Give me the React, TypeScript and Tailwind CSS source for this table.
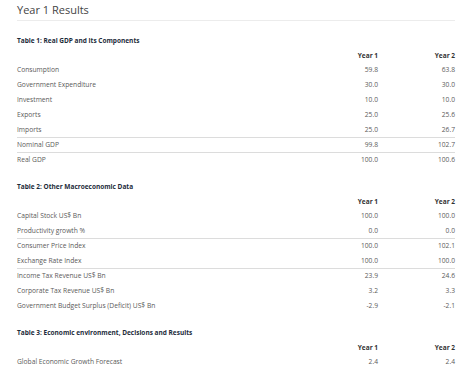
import React from 'react';

type Row = { label: string; y1: string; y2: string; line?: boolean };

const tables: { title: string; rows: Row[] }[] = [
  {
    title: 'Table 1: Real GDP and its Components',
    rows: [
      { label: 'Consumption', y1: '59.8', y2: '63.8' },
      { label: 'Government Expenditure', y1: '30.0', y2: '30.0' },
      { label: 'Investment', y1: '10.0', y2: '10.0' },
      { label: 'Exports', y1: '25.0', y2: '25.6' },
      { label: 'Imports', y1: '25.0', y2: '26.7', line: true },
      { label: 'Nominal GDP', y1: '99.8', y2: '102.7', line: true },
      { label: 'Real GDP', y1: '100.0', y2: '100.6' },
    ],
  },
  {
    title: 'Table 2: Other Macroeconomic Data',
    rows: [
      { label: 'Capital Stock US$ Bn', y1: '100.0', y2: '100.0' },
      { label: 'Productivity growth %', y1: '0.0', y2: '0.0', line: true },
      { label: 'Consumer Price Index', y1: '100.0', y2: '102.1' },
      { label: 'Exchange Rate Index', y1: '100.0', y2: '100.0', line: true },
      { label: 'Income Tax Revenue US$ Bn', y1: '23.9', y2: '24.6' },
      { label: 'Corporate Tax Revenue US$ Bn', y1: '3.2', y2: '3.3' },
      { label: 'Government Budget Surplus (Deficit) US$ Bn', y1: '-2.9', y2: '-2.1' },
    ],
  },
  {
    title: 'Table 3: Economic environment, Decisions and Results',
    rows: [{ label: 'Global Economic Growth Forecast', y1: '2.4', y2: '2.4' }],
  },
];

const DataTable = ({ title, rows, first }: { title: string; rows: Row[]; first?: boolean }) => (
  <div className={first ? 'mt-[12px]' : 'mt-[11px]'}>
    <div className="h-[15px] flex items-center text-[6.5px] font-bold text-[#1c2b3a]">{title}</div>
    <div className="grid grid-cols-[1fr_77px_77px] h-[15px] items-center text-[6.5px] font-bold text-[#333]">
      <span />
      <span className="text-right">Year 1</span>
      <span className="text-right">Year 2</span>
    </div>
    {rows.map((r) => (
      <div
        key={r.label}
        className={`grid grid-cols-[1fr_77px_77px] h-[15px] items-center text-[6.7px] text-[#5a5a5a] ${
          r.line ? 'border-b border-[#dcdcdc]' : ''
        }`}
      >
        <span>{r.label}</span>
        <span className="text-right">{r.y1}</span>
        <span className="text-right">{r.y2}</span>
      </div>
    ))}
  </div>
);

export default function App() {
  return (
    <div className="w-[474px] h-[369px] overflow-hidden bg-white pl-[17px] pr-[19px] font-['Open_Sans',sans-serif]">
      <div className="h-[21px] flex items-center border-b border-[#ececec] text-[11px] text-[#444]">
        Year 1 Results
      </div>
      {tables.map((t, i) => (
        <DataTable key={t.title} title={t.title} rows={t.rows} first={i === 0} />
      ))}
    </div>
  );
}
